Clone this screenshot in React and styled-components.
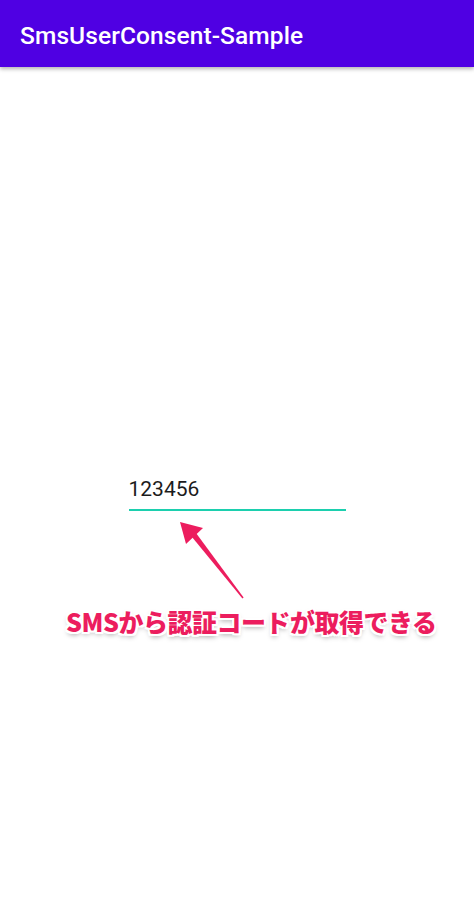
import React from "react";
import styled, { createGlobalStyle } from "styled-components";

const GlobalStyle = createGlobalStyle`
  html, body { margin: 0; padding: 0; background: #fff; }
  body { font-family: Roboto, "Noto Sans", sans-serif; }
`;

const Screen = styled.div`
  width: 474px;
  height: 914px;
  display: flex;
  flex-direction: column;
  position: relative;
  overflow: hidden;
`;

const AppBar = styled.header`
  height: 67px;
  box-sizing: border-box;
  flex: none;
  background: #4f00e3;
  display: flex;
  align-items: center;
  padding: 3px 20px 0;
  box-shadow: 0 2px 4px rgba(0, 0, 0, 0.3);
  position: relative;
  z-index: 1;
`;

const Title = styled.h1`
  margin: 0;
  color: #fff;
  font-family: Roboto, sans-serif;
  font-weight: 500;
  font-size: 24.5px;
  letter-spacing: 0.1px;
`;

const Content = styled.main`
  flex: 1;
  display: flex;
  flex-direction: column;
  align-items: center;
  padding-top: 408px;
`;

const CodeField = styled.div`
  width: 217px;
  padding: 0 0 6px;
  border-bottom: 2px solid #1ccfae;
  font-family: Roboto, sans-serif;
  font-size: 21px;
  line-height: 28px;
  color: #1c1c1c;
`;

const Annotation = styled.div`
  position: absolute;
  left: 0;
  top: 518px;
  width: 474px;
  display: flex;
  flex-direction: column;
  align-items: flex-start;
`;

const Arrow = styled.svg`
  display: block;
  margin-left: 176px;
`;

const Label = styled.p`
  margin: 1px 0 0 66px;
  color: #ec1d5e;
  font-family: "Noto Sans CJK JP", "Noto Sans", sans-serif;
  font-weight: 900;
  font-size: 25px;
  letter-spacing: -0.5px;
  text-shadow:
    -2px 0 #fff, 2px 0 #fff, 0 -2px #fff, 0 2px #fff,
    -2px -2px #fff, 2px -2px #fff, -2px 2px #fff, 2px 2px #fff,
    0 3px 5px rgba(0, 0, 0, 0.35);
`;

function App() {
  return (
    <Screen>
      <GlobalStyle />
      <AppBar>
        <Title>SmsUserConsent-Sample</Title>
      </AppBar>
      <Content>
        <CodeField>123456</CodeField>
      </Content>
      <Annotation>
        <Arrow width="72" height="84" viewBox="0 0 72 84">
          <polygon points="4,4 27,10 10,26" fill="#ec1d5e" />
          <polygon points="20.2,15.2 15.8,18.8 66.4,80.5 67.6,79.5" fill="#ec1d5e" />
        </Arrow>
        <Label>SMSから認証コードが取得できる</Label>
      </Annotation>
    </Screen>
  );
}

export default App;
